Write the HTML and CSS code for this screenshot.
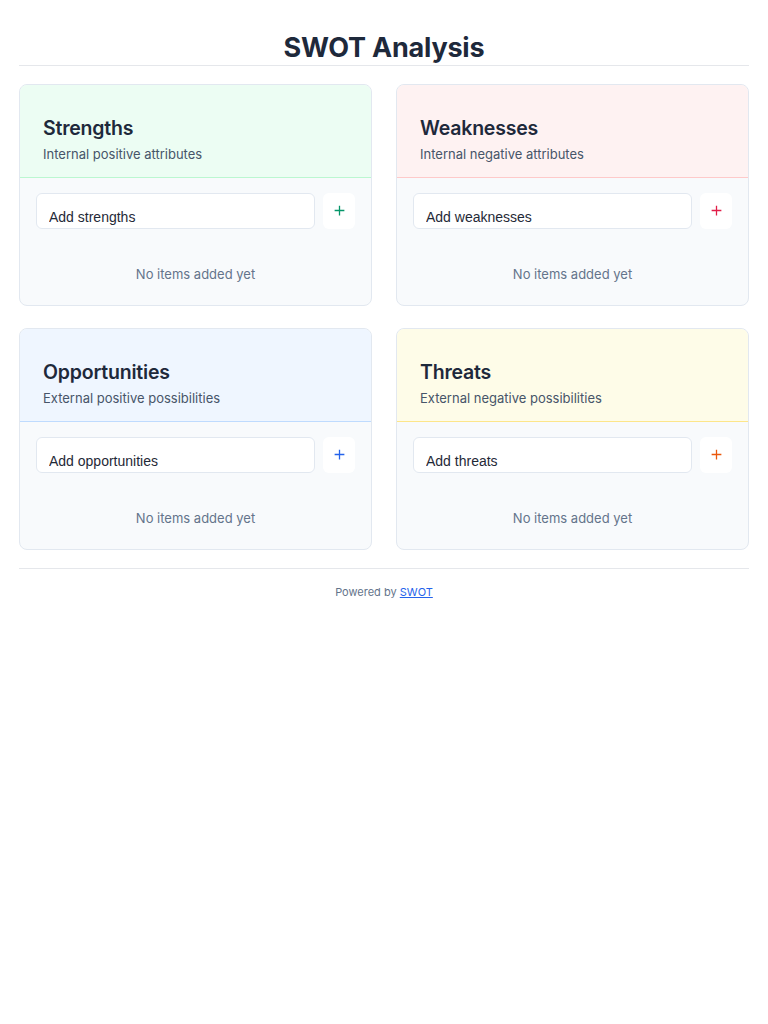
FILE: index.html
```html
<!DOCTYPE html>
<html lang="en">
<head>
<meta charset="utf-8">
<title>SWOT Analysis</title>
<link rel="stylesheet" href="styles.css">
</head>
<body>
<main class="page">
  <h1 class="title">SWOT Analysis</h1>
  <section class="grid">
    <div class="card strengths">
      <div class="card-head">
        <h2>Strengths</h2>
        <p>Internal positive attributes</p>
      </div>
      <div class="card-body">
        <div class="add-row">
          <input class="add-input" type="text" placeholder="Add strengths">
          <button class="add-btn" aria-label="Add"><svg viewBox="0 0 24 24" width="13" height="13"><path d="M12 3v18M3 12h18" fill="none" stroke="currentColor" stroke-width="2.4"/></svg></button>
        </div>
        <p class="empty">No items added yet</p>
      </div>
    </div>
    <div class="card weaknesses">
      <div class="card-head">
        <h2>Weaknesses</h2>
        <p>Internal negative attributes</p>
      </div>
      <div class="card-body">
        <div class="add-row">
          <input class="add-input" type="text" placeholder="Add weaknesses">
          <button class="add-btn" aria-label="Add"><svg viewBox="0 0 24 24" width="13" height="13"><path d="M12 3v18M3 12h18" fill="none" stroke="currentColor" stroke-width="2.4"/></svg></button>
        </div>
        <p class="empty">No items added yet</p>
      </div>
    </div>
    <div class="card opportunities">
      <div class="card-head">
        <h2>Opportunities</h2>
        <p>External positive possibilities</p>
      </div>
      <div class="card-body">
        <div class="add-row">
          <input class="add-input" type="text" placeholder="Add opportunities">
          <button class="add-btn" aria-label="Add"><svg viewBox="0 0 24 24" width="13" height="13"><path d="M12 3v18M3 12h18" fill="none" stroke="currentColor" stroke-width="2.4"/></svg></button>
        </div>
        <p class="empty">No items added yet</p>
      </div>
    </div>
    <div class="card threats">
      <div class="card-head">
        <h2>Threats</h2>
        <p>External negative possibilities</p>
      </div>
      <div class="card-body">
        <div class="add-row">
          <input class="add-input" type="text" placeholder="Add threats">
          <button class="add-btn" aria-label="Add"><svg viewBox="0 0 24 24" width="13" height="13"><path d="M12 3v18M3 12h18" fill="none" stroke="currentColor" stroke-width="2.4"/></svg></button>
        </div>
        <p class="empty">No items added yet</p>
      </div>
    </div>
  </section>
  <footer class="footer">Powered by <a href="#">SWOT</a></footer>
</main>
</body>
</html>
```
FILE: styles.css
```css
* { box-sizing: border-box; }
html, body { margin: 0; background: #ffffff; }
body {
  font-family: Inter, "Noto Sans", sans-serif;
  color: #1e293b;
}
.page {
  padding: 31px 19px 0;
}
.title {
  margin: 0;
  text-align: center;
  font-size: 27px;
  line-height: 34px;
  font-weight: 700;
  letter-spacing: -0.2px;
  color: #1e293b;
  border-bottom: 1px solid #e5e7eb;
}
.grid {
  margin-top: 18px;
  display: grid;
  grid-template-columns: 1fr 1fr;
  column-gap: 24px;
  row-gap: 22px;
}
.card {
  border: 1px solid #e2e8f0;
  border-radius: 8px;
  overflow: hidden;
  background: #f8fafc;
}
.card-head {
  padding: 29px 23px 13px;
  border-bottom: 1px solid;
}
.card-head h2 {
  margin: 0;
  font-size: 19.5px;
  line-height: 28px;
  font-weight: 600;
  letter-spacing: -0.2px;
  color: #1e293b;
}
.card-head p {
  margin: 2px 0 0;
  font-size: 13px;
  line-height: 20px;
  color: #475569;
}
.strengths .card-head { background: #ecfdf3; border-color: #bbf7d0; }
.weaknesses .card-head { background: #fef2f2; border-color: #fecaca; }
.opportunities .card-head { background: #eff6ff; border-color: #bfdbfe; }
.threats .card-head { background: #fefce8; border-color: #fde68a; }
.card-body {
  padding: 15px 16px 21px;
}
.add-row {
  display: flex;
  gap: 8px;
}
.add-input {
  flex: 1;
  min-width: 0;
  height: 36px;
  padding: 18px 12px 7px;
  line-height: 9px;
  border: 1px solid #e2e8f0;
  border-radius: 6px;
  background: #ffffff;
  font-family: "Liberation Sans", Arial, sans-serif;
  font-size: 14px;
  color: #111827;
  outline: none;
}
.add-input::placeholder { color: #1f2937; opacity: 1; }
.add-btn {
  width: 32px;
  height: 36px;
  flex: none;
  border: none;
  border-radius: 6px;
  background: #ffffff;
  display: flex;
  align-items: center;
  justify-content: center;
  padding: 0 0 2px;
}
.strengths .add-btn { color: #059669; }
.weaknesses .add-btn { color: #e11d48; }
.opportunities .add-btn { color: #2563eb; }
.threats .add-btn { color: #ea580c; }
.empty {
  margin: 35px 0 0;
  text-align: center;
  font-size: 13px;
  line-height: 20px;
  color: #64748b;
}
.footer {
  margin-top: 18px;
  border-top: 1px solid #e5e7eb;
  padding-top: 15px;
  text-align: center;
  font-size: 11px;
  line-height: 16px;
  color: #64748b;
}
.footer a { color: #2563eb; text-decoration: underline; }
```
